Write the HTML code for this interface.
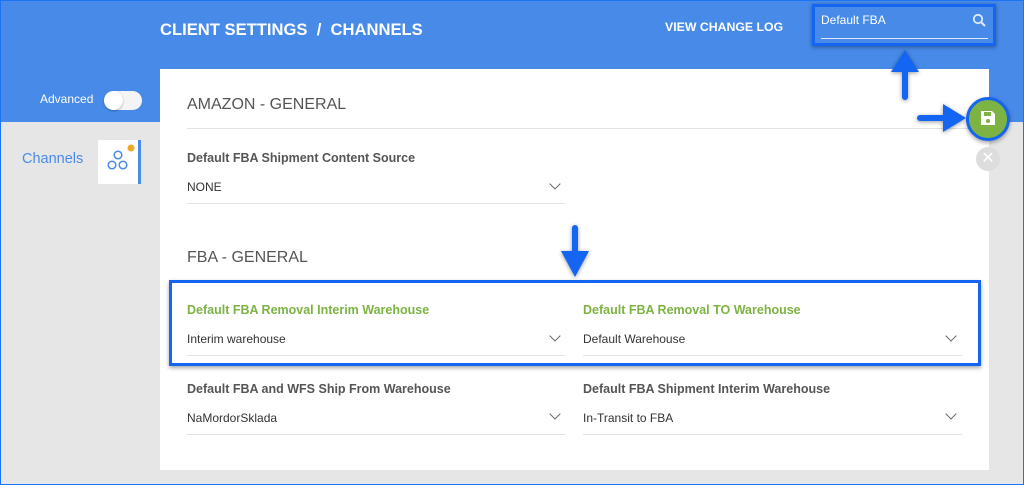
<!DOCTYPE html><html><head><style>
*{margin:0;padding:0;box-sizing:border-box}
body{width:1024px;height:485px;overflow:hidden;font-family:"Liberation Sans",Arial,sans-serif;background:#e6e6e6;position:relative}
.frame{position:absolute;inset:0;border:1px solid #1a73f5;z-index:20;pointer-events:none}
.a{position:absolute}
.lbl{position:absolute;font-size:12.5px;font-weight:bold;color:#555}
.val{position:absolute;font-size:12px;color:#333}
.line{position:absolute;height:1px;background:#e2e2e2}
.chev{position:absolute;width:8px;height:8px;border-right:1.5px solid #666;border-bottom:1.5px solid #666;transform:rotate(45deg)}
.h{position:absolute;font-size:16px;color:#555}
</style></head><body>
<div class="a" style="left:0;top:0;width:1024px;height:69px;background:#478ae8"></div>
<div class="a" style="left:0;top:69px;width:160px;height:53px;background:#478ae8"></div>
<div class="a" style="left:989px;top:69px;width:35px;height:53px;background:#478ae8"></div>
<div class="a" style="left:160px;top:20px;color:#fff;font-weight:bold;font-size:16.6px">CLIENT SETTINGS &nbsp;/ &nbsp;CHANNELS</div>
<div class="a" style="left:665px;top:20px;color:#fff;font-weight:bold;font-size:12.3px">VIEW CHANGE LOG</div>
<div class="a" style="left:812px;top:4px;width:184px;height:42px;border:3px solid #1466f2;box-shadow:0 1px 4px rgba(0,0,0,.4)"></div>
<div class="a" style="left:821px;top:13px;color:#fff;font-size:12px">Default FBA</div>
<svg class="a" style="left:972px;top:13px" width="14" height="14"><circle cx="6" cy="6" r="4.2" stroke="#dfe9fb" stroke-width="1.8" fill="none"/><line x1="9" y1="9" x2="13" y2="13" stroke="#dfe9fb" stroke-width="2"/></svg>
<div class="a" style="left:821px;top:38px;width:167px;height:1px;background:#dfe9fb"></div>
<div class="a" style="left:40px;top:92px;color:#fff;font-size:12px">Advanced</div>
<div class="a" style="left:104px;top:91px;width:38px;height:19px;border-radius:10px;background:#f4f4f4"></div>
<div class="a" style="left:104px;top:91px;width:19px;height:19px;border-radius:50%;background:#fff;box-shadow:0 1px 2px rgba(0,0,0,.3)"></div>
<div class="a" style="left:22px;top:151px;color:#4a8be8;font-size:14.5px">Channels</div>
<div class="a" style="left:98px;top:140px;width:43px;height:44px;background:#fff;border-right:3px solid #4a8be8"></div>
<svg class="a" style="left:98px;top:140px" width="40" height="44"><circle cx="20" cy="15" r="3.8" fill="none" stroke="#4a8be8" stroke-width="1.5"/><circle cx="14" cy="25" r="3.8" fill="none" stroke="#4a8be8" stroke-width="1.5"/><circle cx="25" cy="25" r="3.8" fill="none" stroke="#4a8be8" stroke-width="1.5"/><circle cx="33" cy="8" r="3.5" fill="#f0a922"/></svg>
<div class="a" style="left:160px;top:69px;width:829px;height:401px;background:#fff"></div>
<div class="h" style="left:187px;top:96px">AMAZON - GENERAL</div>
<div class="line" style="left:187px;top:128px;width:802px"></div>
<div class="lbl" style="left:187px;top:151px">Default FBA Shipment Content Source</div>
<div class="val" style="left:187px;top:180px">NONE</div><div class="chev" style="left:551px;top:180px"></div>
<div class="line" style="left:187px;top:203px;width:378px"></div>
<div class="h" style="left:187px;top:249px">FBA - GENERAL</div>
<div class="a" style="left:169px;top:280px;width:812px;height:86px;border:3px solid #1466f2;box-shadow:0 2px 4px rgba(0,0,0,.35)"></div>
<div class="lbl" style="left:187px;top:303px;color:#7cb342">Default FBA Removal Interim Warehouse</div>
<div class="val" style="left:187px;top:332px">Interim warehouse</div><div class="chev" style="left:551px;top:332px"></div>
<div class="line" style="left:187px;top:355px;width:378px"></div>
<div class="lbl" style="left:583px;top:303px;color:#7cb342">Default FBA Removal TO Warehouse</div>
<div class="val" style="left:583px;top:332px">Default Warehouse</div><div class="chev" style="left:947px;top:332px"></div>
<div class="line" style="left:583px;top:355px;width:379px"></div>
<div class="lbl" style="left:187px;top:382px">Default FBA and WFS Ship From Warehouse</div>
<div class="val" style="left:187px;top:411px">NaMordorSklada</div><div class="chev" style="left:551px;top:410px"></div>
<div class="line" style="left:187px;top:434px;width:378px"></div>
<div class="lbl" style="left:583px;top:382px">Default FBA Shipment Interim Warehouse</div>
<div class="val" style="left:583px;top:411px">In-Transit to FBA</div><div class="chev" style="left:947px;top:410px"></div>
<div class="line" style="left:583px;top:434px;width:379px"></div>
<div class="a" style="left:966px;top:97px;width:44px;height:44px;border-radius:50%;background:#7cb342;border:3px solid #1466f2;box-shadow:0 2px 4px rgba(0,0,0,.35)"></div>
<svg class="a" style="left:980px;top:110px" width="16" height="16"><path d="M1 1h11l3 3v11H1z" fill="#fff"/><rect x="4" y="2" width="7" height="4" fill="#7cb342"/><circle cx="8" cy="11" r="2" fill="#7cb342"/></svg>
<div class="a" style="left:976px;top:147px;width:24px;height:24px;border-radius:50%;background:#ddd;color:#fff;font-size:16px;text-align:center;line-height:24px">✕</div>
<svg class="a" style="left:0;top:0;filter:drop-shadow(0 1px 2px rgba(0,0,0,.4))" width="1024" height="485">
<g fill="#1466f2" stroke="#1466f2">
<line x1="905" y1="70" x2="905" y2="97" stroke-width="6" stroke-linecap="round"/><polygon points="891,72 919,72 905,50" stroke="none"/>
<line x1="920" y1="118" x2="945" y2="118" stroke-width="6" stroke-linecap="round"/><polygon points="943,104 943,132 966,118" stroke="none"/>
<line x1="575" y1="228" x2="575" y2="255" stroke-width="6" stroke-linecap="round"/><polygon points="561,251 589,251 575,277" stroke="none"/>
</g></svg>
<div class="frame"></div>
</body></html>
